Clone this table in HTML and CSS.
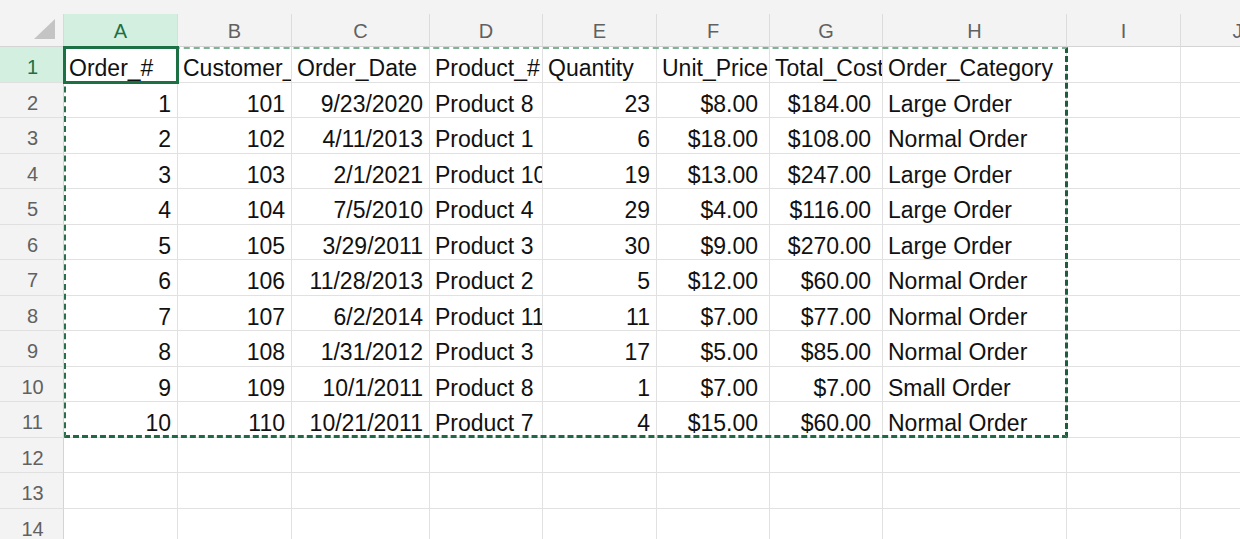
FILE: index.html
```html
<!DOCTYPE html>
<html>
<head>
<meta charset="utf-8">
<link rel="stylesheet" href="styles.css">
</head>
<body>
<div class="toolbar-edge"></div>
<div class="sheet-wrap">
<div class="sheet">
  <div class="corner"><svg class="corner-tri" width="22" height="21" viewBox="0 0 22 21"><polygon points="21,0 21,20 0,20" fill="#c4c4c4"/></svg></div>
  <div class="colhead sel">A</div>
  <div class="colhead">B</div>
  <div class="colhead">C</div>
  <div class="colhead">D</div>
  <div class="colhead">E</div>
  <div class="colhead">F</div>
  <div class="colhead">G</div>
  <div class="colhead">H</div>
  <div class="colhead">I</div>
  <div class="colhead">J</div>

  <div class="rowhead sel">1</div>
  <div class="cell active">Order_#</div>
  <div class="cell">Customer_ID</div>
  <div class="cell">Order_Date</div>
  <div class="cell">Product_#</div>
  <div class="cell">Quantity</div>
  <div class="cell">Unit_Price</div>
  <div class="cell">Total_Cost</div>
  <div class="cell">Order_Category</div>
  <div class="cell"></div>
  <div class="cell"></div>

  <div class="rowhead">2</div>
  <div class="cell num">1</div><div class="cell num">101</div><div class="cell num">9/23/2020</div><div class="cell">Product 8</div><div class="cell num">23</div><div class="cell num cur">$8.00</div><div class="cell num cur">$184.00</div><div class="cell">Large Order</div><div class="cell"></div><div class="cell"></div>

  <div class="rowhead">3</div>
  <div class="cell num">2</div><div class="cell num">102</div><div class="cell num">4/11/2013</div><div class="cell">Product 1</div><div class="cell num">6</div><div class="cell num cur">$18.00</div><div class="cell num cur">$108.00</div><div class="cell">Normal Order</div><div class="cell"></div><div class="cell"></div>

  <div class="rowhead">4</div>
  <div class="cell num">3</div><div class="cell num">103</div><div class="cell num">2/1/2021</div><div class="cell">Product 10</div><div class="cell num">19</div><div class="cell num cur">$13.00</div><div class="cell num cur">$247.00</div><div class="cell">Large Order</div><div class="cell"></div><div class="cell"></div>

  <div class="rowhead">5</div>
  <div class="cell num">4</div><div class="cell num">104</div><div class="cell num">7/5/2010</div><div class="cell">Product 4</div><div class="cell num">29</div><div class="cell num cur">$4.00</div><div class="cell num cur">$116.00</div><div class="cell">Large Order</div><div class="cell"></div><div class="cell"></div>

  <div class="rowhead">6</div>
  <div class="cell num">5</div><div class="cell num">105</div><div class="cell num">3/29/2011</div><div class="cell">Product 3</div><div class="cell num">30</div><div class="cell num cur">$9.00</div><div class="cell num cur">$270.00</div><div class="cell">Large Order</div><div class="cell"></div><div class="cell"></div>

  <div class="rowhead">7</div>
  <div class="cell num">6</div><div class="cell num">106</div><div class="cell num">11/28/2013</div><div class="cell">Product 2</div><div class="cell num">5</div><div class="cell num cur">$12.00</div><div class="cell num cur">$60.00</div><div class="cell">Normal Order</div><div class="cell"></div><div class="cell"></div>

  <div class="rowhead">8</div>
  <div class="cell num">7</div><div class="cell num">107</div><div class="cell num">6/2/2014</div><div class="cell">Product 11</div><div class="cell num">11</div><div class="cell num cur">$7.00</div><div class="cell num cur">$77.00</div><div class="cell">Normal Order</div><div class="cell"></div><div class="cell"></div>

  <div class="rowhead">9</div>
  <div class="cell num">8</div><div class="cell num">108</div><div class="cell num">1/31/2012</div><div class="cell">Product 3</div><div class="cell num">17</div><div class="cell num cur">$5.00</div><div class="cell num cur">$85.00</div><div class="cell">Normal Order</div><div class="cell"></div><div class="cell"></div>

  <div class="rowhead">10</div>
  <div class="cell num">9</div><div class="cell num">109</div><div class="cell num">10/1/2011</div><div class="cell">Product 8</div><div class="cell num">1</div><div class="cell num cur">$7.00</div><div class="cell num cur">$7.00</div><div class="cell">Small Order</div><div class="cell"></div><div class="cell"></div>

  <div class="rowhead">11</div>
  <div class="cell num">10</div><div class="cell num">110</div><div class="cell num">10/21/2011</div><div class="cell">Product 7</div><div class="cell num">4</div><div class="cell num cur">$15.00</div><div class="cell num cur">$60.00</div><div class="cell">Normal Order</div><div class="cell"></div><div class="cell"></div>

  <div class="rowhead">12</div>
  <div class="cell"></div><div class="cell"></div><div class="cell"></div><div class="cell"></div><div class="cell"></div><div class="cell"></div><div class="cell"></div><div class="cell"></div><div class="cell"></div><div class="cell"></div>

  <div class="rowhead">13</div>
  <div class="cell"></div><div class="cell"></div><div class="cell"></div><div class="cell"></div><div class="cell"></div><div class="cell"></div><div class="cell"></div><div class="cell"></div><div class="cell"></div><div class="cell"></div>

  <div class="rowhead">14</div>
  <div class="cell"></div><div class="cell"></div><div class="cell"></div><div class="cell"></div><div class="cell"></div><div class="cell"></div><div class="cell"></div><div class="cell"></div><div class="cell"></div><div class="cell"></div>
</div>
<div class="copy-range"></div>
</div>
</body>
</html>
```

FILE: styles.css
```css
html, body {
  margin: 0;
  padding: 0;
  background: #ffffff;
  overflow: hidden;
  height: 539px;
}

body {
  font-family: "Liberation Sans", Arial, sans-serif;
}

.toolbar-edge {
  height: 14px;
  background: #f3f3f3;
}

.sheet-wrap {
  position: relative;
  overflow: hidden;
}

.sheet {
  display: grid;
  grid-template-columns: 64px 114px 114px 138px 113px 114px 113px 113px 184px 114px 114px;
  grid-template-rows: 33px repeat(14, 35.5px);
  background: #ffffff;
}

.corner {
  background: #f3f3f3;
  border-right: 1px solid #d9d9d9;
  border-bottom: 1px solid #d4d4d4;
  box-sizing: border-box;
  display: flex;
  align-items: flex-end;
  justify-content: flex-end;
  padding: 0 7px 6px 0;
}

.corner-tri {
  display: block;
}

.colhead {
  background: #f3f3f3;
  border-right: 1px solid #dcdcdc;
  border-bottom: 1px solid #d4d4d4;
  box-sizing: border-box;
  display: flex;
  align-items: center;
  justify-content: center;
  font-size: 20px;
  color: #616161;
  padding-top: 2px;
}

.colhead.sel {
  background: #d3efdf;
  color: #1d7044;
}

.rowhead {
  background: #f3f3f3;
  border-right: 1px solid #d4d4d4;
  border-bottom: 1px solid #e0e0e0;
  box-sizing: border-box;
  display: flex;
  align-items: center;
  justify-content: center;
  font-size: 20px;
  color: #616161;
  padding: 7px 0 0 2px;
}

.rowhead.sel {
  background: #d3efdf;
  color: #1d7044;
}

.cell {
  border-right: 1px solid #e1e1e1;
  border-bottom: 1px solid #e1e1e1;
  box-sizing: border-box;
  display: flex;
  align-items: center;
  font-size: 23px;
  color: #111111;
  padding: 9px 5px 0 5px;
  white-space: nowrap;
  overflow: hidden;
}

.cell.num {
  justify-content: flex-end;
  padding-right: 6px;
}

.cell.num.cur {
  padding-right: 11px;
}

.cell.active {
  outline: 3px solid #1d7044;
  outline-offset: -2px;
  position: relative;
  z-index: 3;
}

/* "copied" marching-ants range over A1:H11 */
.copy-range {
  position: absolute;
  left: 64px;
  top: 33px;
  width: 1004px;
  height: 391px;
  box-sizing: border-box;
  border-top: 2px dashed #7fb396;
  border-left: 2px dashed #2b6e4b;
  border-right: 3px dashed #1f5e3d;
  border-bottom: 3px dashed #1f6a43;
  pointer-events: none;
  z-index: 2;
}
```
